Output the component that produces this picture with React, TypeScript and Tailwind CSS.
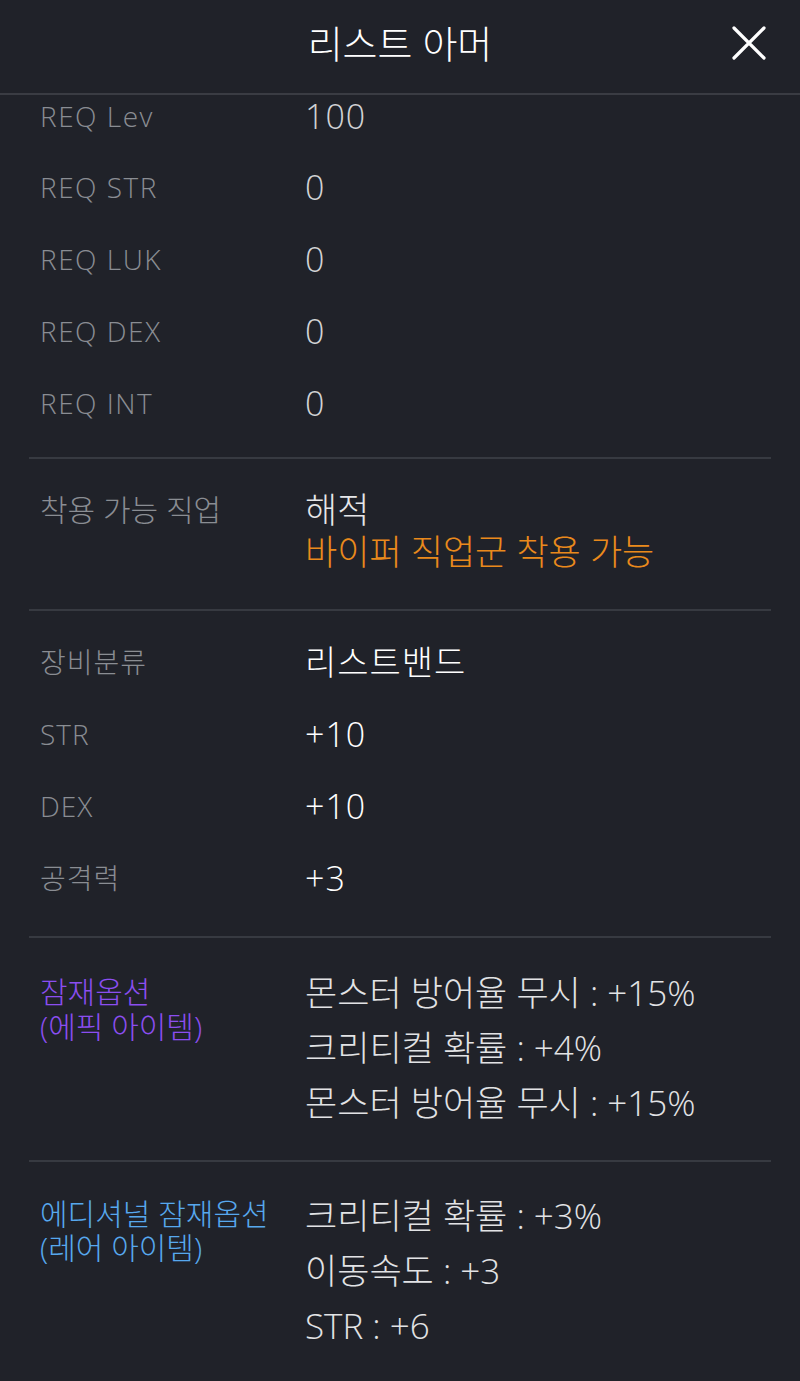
import React from "react";

const font = { fontFamily: '"Open Sans", "Noto Sans CJK KR", sans-serif' };

type Row = { label: string; value: string };

const reqRows: Row[] = [
  { label: "REQ Lev", value: "100" },
  { label: "REQ STR", value: "0" },
  { label: "REQ LUK", value: "0" },
  { label: "REQ DEX", value: "0" },
  { label: "REQ INT", value: "0" },
];

const statRows: Row[] = [
  { label: "장비분류", value: "리스트밴드" },
  { label: "STR", value: "+10" },
  { label: "DEX", value: "+10" },
  { label: "공격력", value: "+3" },
];

const Divider = () => <div className="mx-[29px] h-[2px] bg-[#373a41]" />;

export default function App() {
  return (
    <div className="w-[800px] h-[1381px] bg-[#202229] overflow-hidden flex flex-col" style={font}>
      {/* header */}
      <div className="relative h-[95px] shrink-0 flex items-center justify-center border-b-2 border-[#3a3c43]">
        <span className="text-[38px] leading-[50px] text-white font-light -mt-[8px]">리스트 아머</span>
        <button className="absolute right-[34px] top-[26px] w-[34px] h-[34px] flex items-center justify-center">
          <svg width="34" height="34" viewBox="0 0 34 34" fill="none" stroke="#ffffff" strokeWidth="3.2" strokeLinecap="round">
            <path d="M2 2 L32 32 M32 2 L2 32" />
          </svg>
        </button>
      </div>

      {/* list, scrolled a little: first row sits tight under the header */}
      <div className="flex-1">
        <div className="pb-[18px]">
          {reqRows.map((r, i) => (
            <div
              key={r.label}
              className={i === 0 ? "h-[56px] flex items-start px-[40px]" : "h-[72px] flex items-center px-[40px]"}
            >
              <div className="w-[265px] text-[28px] leading-[42px] tracking-[1.5px] text-[#8a8d93] font-light">{r.label}</div>
              <div className="text-[34px] leading-[42px] tracking-[1px] text-[#d2d3d5] font-light">{r.value}</div>
            </div>
          ))}
        </div>
        <Divider />

        <div className="flex px-[40px] pt-[30px] pb-[36px]">
          <div className="w-[265px] text-[30px] leading-[42px] text-[#8a8d93] font-light">착용 가능 직업</div>
          <div className="text-[35px] leading-[42px] font-light">
            <div className="text-[#e6e7e9]">해적</div>
            <div className="text-[#ea8a1c]">바이퍼 직업군 착용 가능</div>
          </div>
        </div>
        <Divider />

        <div className="pt-[15px] pb-[22px]">
          {statRows.map((r) => (
            <div key={r.label} className="h-[72px] flex items-center px-[40px]">
              <div className="w-[265px] text-[28px] leading-[42px] tracking-[1px] text-[#8a8d93] font-light">{r.label}</div>
              <div className="text-[34px] leading-[42px] tracking-[1px] text-white font-light">{r.value}</div>
            </div>
          ))}
        </div>
        <Divider />

        <div className="flex px-[40px] pt-[27px] pb-[30px]">
          <div className="w-[265px] pt-[9px] text-[30px] leading-[35px] text-[#8b4ef0] font-light">
            <div>잠재옵션</div>
            <div>(에픽 아이템)</div>
          </div>
          <div className="text-[35px] leading-[55px] text-[#e2e3e5] font-light">
            <div>몬스터 방어율 무시 : +15%</div>
            <div>크리티컬 확률 : +4%</div>
            <div>몬스터 방어율 무시 : +15%</div>
          </div>
        </div>
        <Divider />

        <div className="flex px-[40px] pt-[26px]">
          <div className="w-[265px] pt-[9px] text-[30px] leading-[34px] text-[#57a8ee] font-light">
            <div>에디셔널 잠재옵션</div>
            <div>(레어 아이템)</div>
          </div>
          <div className="text-[35px] leading-[55px] text-[#e2e3e5] font-light">
            <div>크리티컬 확률 : +3%</div>
            <div>이동속도 : +3</div>
            <div>STR : +6</div>
          </div>
        </div>
      </div>
    </div>
  );
}
